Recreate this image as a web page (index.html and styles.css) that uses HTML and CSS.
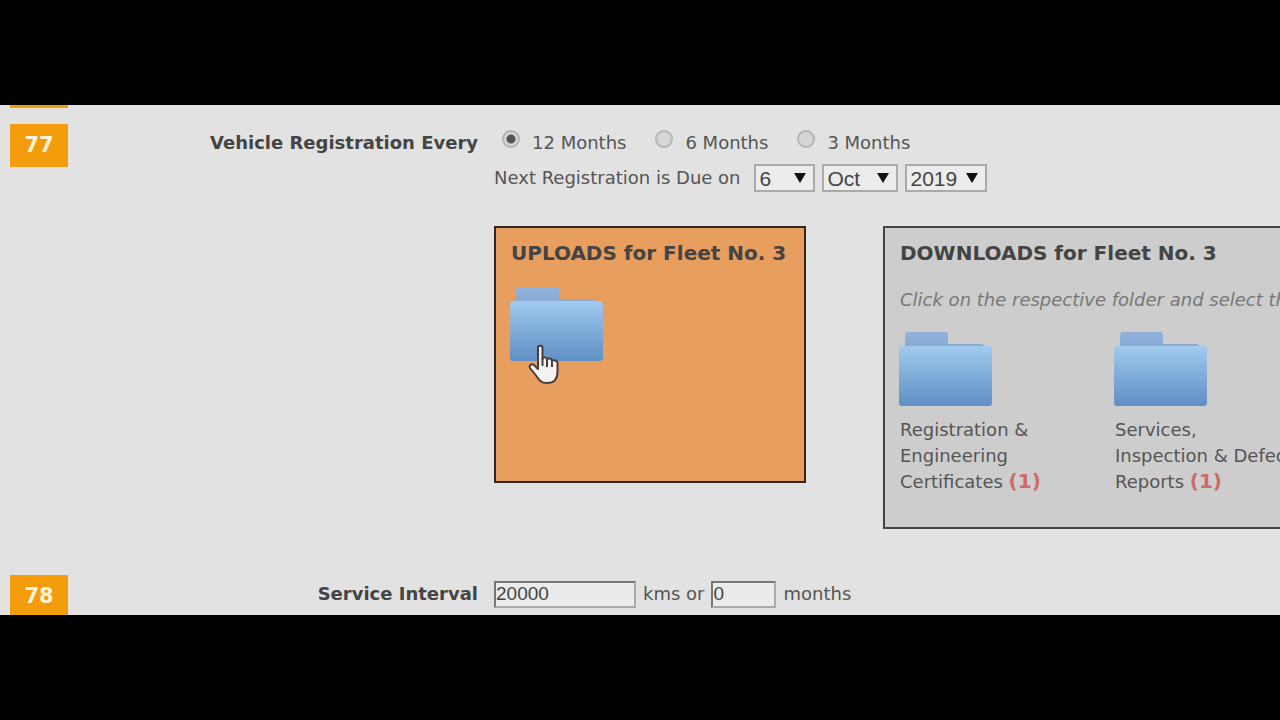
FILE: index.html
```
<!DOCTYPE html>
<html lang="en">

<head>
    <meta charset="UTF-8">
    <meta name="viewport" content="width=device-width, initial-scale=1.0">
    <title>Fleet Details</title>
    <link rel="stylesheet" href="styles.css">
</head>

<body>
    <svg class="defs" width="0" height="0" aria-hidden="true">
        <defs>
            <linearGradient id="front" x1="0" y1="0" x2="0" y2="1">
                <stop offset="0" stop-color="#a3caee" />
                <stop offset="0.4" stop-color="#86b2dd" />
                <stop offset="1" stop-color="#608fc4" />
            </linearGradient>
            <linearGradient id="back" x1="0" y1="0" x2="0" y2="1">
                <stop offset="0" stop-color="#92b2dc" />
                <stop offset="1" stop-color="#84a8d0" />
            </linearGradient>
            <symbol id="folder" viewBox="0 0 94 76">
                <path d="M7 20V4q0-3 3-3h37q3 0 3 3v9h33q3 0 5 4v3z" fill="url(#back)" />
                <path d="M1 18q0-3 3-3h87q3 0 3 3v54q0 3-3 3H4q-3 0-3-3z" fill="url(#front)" />
            </symbol>
        </defs>
    </svg>

    <main class="page">
        <div class="badge badge-end"></div>

        <section class="row">
            <div class="badge">77</div>
            <div class="row-label">Vehicle Registration Every</div>
            <div class="row-content">
                <div class="options">
                    <label class="option"><input type="radio" name="every" value="12" checked>12 Months</label>
                    <label class="option"><input type="radio" name="every" value="6">6 Months</label>
                    <label class="option"><input type="radio" name="every" value="3">3 Months</label>
                </div>
                <div class="due">
                    <label for="day">Next Registration is Due on</label>
                    <span class="select day">
                        <select id="day" name="day">
                            <option>6</option>
                        </select>
                    </span>
                    <span class="select month">
                        <select id="month" name="month" aria-label="Month">
                            <option>Oct</option>
                        </select>
                    </span>
                    <span class="select year">
                        <select id="year" name="year" aria-label="Year">
                            <option>2019</option>
                        </select>
                    </span>
                </div>

                <div class="panels">
                    <div class="panel uploads">
                        <h2>UPLOADS for Fleet No. 3</h2>
                        <a href="#" class="folder" aria-label="Uploads">
                            <svg class="folder-icon"><use href="#folder" /></svg>
                            <svg class="hand" viewBox="0 0 32 40">
                                <path d="M10 3.500C10 1 14.500 1 14.500 3.500V15C15 12.500 19 13 19 15.500C20 13.500 24 14.500 24 17C25 15.500 29.500 16.500 29.500 19V28C29.500 36 25 39 19 39C13 39 11 36 8 31.500L2 24C0.500 21 4 19.500 6 21L10 25z" fill="#f4f2f2" stroke="#4a3f3f" stroke-width="2" stroke-linejoin="round" />
                                <path d="M14.500 14v8M19 16v7M24 17v6" fill="none" stroke="#4a3f3f" stroke-width="2" />
                            </svg>
                        </a>
                    </div>
                    <div class="panel downloads">
                        <h2>DOWNLOADS for Fleet No. 3</h2>
                        <p class="hint">Click on the respective folder and select the file</p>
                        <div class="folders">
                            <a href="#" class="folder">
                                <svg class="folder-icon"><use href="#folder" /></svg>
                                <span>Registration &amp;<br>Engineering<br>Certificates <b>(1)</b></span>
                            </a>
                            <a href="#" class="folder">
                                <svg class="folder-icon"><use href="#folder" /></svg>
                                <span>Services,<br>Inspection &amp; Defect<br>Reports <b>(1)</b></span>
                            </a>
                        </div>
                    </div>
                </div>
            </div>
        </section>

        <section class="row">
            <div class="badge">78</div>
            <label class="row-label" for="kms">Service Interval</label>
            <div class="row-content interval">
                <input type="text" class="kms" id="kms" name="kms" value="20000">
                <label for="kms">kms or</label>
                <input type="text" class="months" id="months" name="months" value="0">
                <label for="months">months</label>
            </div>
        </section>
    </main>
</body>

</html>
```
FILE: styles.css
```
* {
    box-sizing: border-box;
}

body {
    margin: 0;
    padding: 105px 0;
    height: 100vh;
    overflow: hidden;
    background-color: #000;
    color: #555;
    font-family: "DejaVu Sans", Verdana, sans-serif;
    font-size: 18px;
    line-height: 26px;
}

.defs {
    position: absolute;
}

.page {
    height: 100%;
    padding-left: 10px;
    overflow: hidden;
    background-color: #e2e2e2;
}

.badge {
    width: 58px;
    height: 43px;
    background-color: #f39c0c;
    color: #fff3d8;
    font-size: 21px;
    font-weight: bold;
    line-height: 43px;
    text-align: center;
}

.badge-end {
    height: 3px;
    margin-bottom: 16px;
}

.row {
    display: grid;
    grid-template-columns: 58px 410px 1fr;
    margin-bottom: 46px;
}

.row-label {
    padding-top: 6px;
    color: #444;
    font-weight: bold;
    text-align: right;
}

.row-content {
    min-width: 0;
    padding-left: 16px;
    white-space: nowrap;
}

.options {
    display: flex;
    gap: 29px;
    padding: 6px 0 0 8px;
}

.option {
    display: flex;
}

.option input {
    appearance: none;
    width: 18px;
    height: 18px;
    margin: 0 12px 0 0;
    border: 2px solid #b4b4b4;
    border-radius: 50%;
    background-color: #d6d6d6;
}

.option input:checked {
    background-image: radial-gradient(circle, #555 4px, transparent 5px);
}

.due {
    display: flex;
    align-items: center;
    gap: 7px;
    margin-top: 8px;
}

.due label {
    margin-right: 6px;
}

.select {
    position: relative;
}

.select::after {
    content: "";
    position: absolute;
    top: 9px;
    right: 9px;
    border: 6px solid transparent;
    border-top: 10px solid #111;
    border-bottom: 0;
    pointer-events: none;
}

.select select {
    appearance: none;
    display: block;
    width: 100%;
    height: 28px;
    padding: 0 4px;
    border: 2px solid #aaa;
    border-radius: 0;
    background-color: #ececec;
    color: #444;
    font-family: "Liberation Sans", Arial, sans-serif;
    font-size: 21px;
}

.day {
    width: 61px;
}

.month {
    width: 76px;
}

.year {
    width: 82px;
}

.panels {
    display: flex;
    align-items: flex-start;
    gap: 77px;
    margin-top: 34px;
}

.panel {
    flex: none;
    padding: 12px 15px;
    border: 2px solid #444;
    background-color: #cdcdcd;
}

.panel h2 {
    margin: 0;
    color: #444;
    font-size: 20px;
    line-height: 26px;
}

.uploads {
    width: 312px;
    min-height: 257px;
    border-color: #33261c;
    background-color: #e79e5e;
}

.uploads .folder {
    margin-top: 20px;
}

.downloads {
    width: 680px;
    min-height: 303px;
}

.hint {
    margin: 21px 0 18px;
    color: #777;
    font-style: italic;
}

.folders {
    display: flex;
}

.folder {
    display: block;
    position: relative;
    width: 215px;
    color: #555;
    text-decoration: none;
}

.folder-icon {
    display: block;
    width: 94px;
    height: 76px;
    margin: 0 0 10px -2px;
}

.folder b {
    color: #cf6a68;
    font-size: 20px;
    line-height: 20px;
}

.hand {
    position: absolute;
    left: 17px;
    top: 58px;
    width: 32px;
    height: 40px;
}

.interval {
    display: flex;
    align-items: center;
    gap: 7px;
    height: 38px;
}

.interval input {
    height: 27px;
    padding: 0;
    border: 2px solid #aaa;
    border-top-color: #777;
    border-left-color: #777;
    background-color: #ebebeb;
    color: #444;
    font-family: "Liberation Sans", Arial, sans-serif;
    font-size: 19px;
}

.kms {
    width: 142px;
}

.months {
    width: 65px;
}
```
